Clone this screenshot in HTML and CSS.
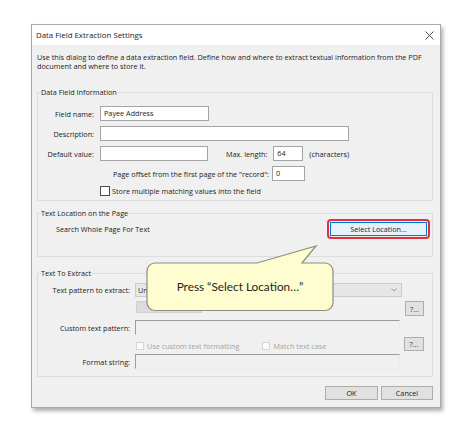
FILE: index.html
```html
<!DOCTYPE html>
<html lang="en">
<head>
<meta charset="utf-8">
<title>Data Field Extraction Settings</title>
<link rel="stylesheet" href="styles.css">
</head>
<body>
<div class="screen">
  <div class="dialog">
    <div class="titlebar">
      <span class="title">Data Field Extraction Settings</span>
      <svg class="close" width="9" height="9" viewBox="0 0 9 9"><path d="M0.5 0.5 L8.5 8.5 M8.5 0.5 L0.5 8.5" stroke="#3a3a3a" stroke-width="0.9" fill="none"/></svg>
    </div>
    <div class="body">
      <p class="intro">Use this dialog to define a data extraction field. Define how and where to extract textual information from the PDF<br>document and where to store it.</p>

      <fieldset class="group g1">
        <legend>Data Field Information</legend>
        <div class="form1">
          <span class="lbl">Field name:</span>
          <div class="cell"><span class="field w109">Payee Address</span></div>
          <span class="lbl">Description:</span>
          <div class="cell"><span class="field w249"></span></div>
          <span class="lbl">Default value:</span>
          <div class="cell">
            <span class="field w108"></span>
            <span class="maxlbl">Max. length:</span>
            <span class="field w30">64</span>
            <span class="unit">(characters)</span>
          </div>
          <span></span>
          <div class="cell offset">
            <span>Page offset from the first page of the "record":</span>
            <span class="field w33">0</span>
          </div>
          <span></span>
          <div class="cell check">
            <span class="box"></span>
            <span>Store multiple matching values into the field</span>
          </div>
        </div>
      </fieldset>

      <fieldset class="group g2">
        <legend>Text Location on the Page</legend>
        <div class="locrow">
          <span>Search Whole Page For Text</span>
          <span class="highlight"><span class="btn focus">Select Location...</span></span>
        </div>
      </fieldset>

      <fieldset class="group g3">
        <legend>Text To Extract</legend>
        <div class="r3 ra">
          <span class="lbl">Text pattern to extract:</span>
          <span class="combo"><span class="combo-text">Un</span><svg width="6" height="4" viewBox="0 0 6 4"><path d="M0.5 0.5 L3 3 L5.5 0.5" stroke="#8a8a8a" stroke-width="0.8" fill="none"/></svg></span>
          <span></span>
        </div>
        <div class="r3 rb">
          <span></span>
          <span class="cell"><span class="graybox"></span></span>
          <span class="btn small">?...</span>
        </div>
        <div class="r3 rc">
          <span class="lbl">Custom text pattern:</span>
          <span class="dis-field"></span>
          <span></span>
        </div>
        <div class="r3 rd">
          <span></span>
          <span class="cell dis">
            <span class="dbox"></span><span class="dtext first">Use custom text formatting</span>
            <span class="dbox"></span><span class="dtext">Match text case</span>
          </span>
          <span class="btn small">?...</span>
        </div>
        <div class="r3 re">
          <span class="lbl">Format string:</span>
          <span class="dis-field"></span>
          <span></span>
        </div>
      </fieldset>

      <div class="footer">
        <span class="btn ok">OK</span>
        <span class="btn cancel">Cancel</span>
      </div>
    </div>
  </div>

  <div class="callout">
    <svg class="bubble" width="188" height="67" viewBox="0 0 188 67"><path d="M9 18 H111 L170 1 L156 18 H179 A8 8 0 0 1 187 26 V57.5 A8 8 0 0 1 179 65.5 H9 A8 8 0 0 1 1 57.5 V26 A8 8 0 0 1 9 18 Z" fill="#fdfdcf" stroke="#8e8e80" stroke-width="1.2"/></svg>
    <div class="callout-text">Press “Select Location…”</div>
  </div>
</div>
</body>
</html>
```

FILE: styles.css
```css
html, body {
  margin: 0;
  padding: 0;
  background: #ffffff;
}

body {
  font-family: "Open Sans", "Noto Sans", sans-serif;
  font-size: 7.25px;
  color: #1a1a1a;
}

.screen {
  position: relative;
  width: 474px;
  height: 434px;
  box-sizing: border-box;
  padding: 24px 0 0 31px;
  overflow: hidden;
}

.dialog {
  width: 410px;
  height: 384px;
  box-sizing: border-box;
  border: 1px solid #a9a9a9;
  background: #f0f0f0;
  box-shadow: 2px 3px 4px rgba(0, 0, 0, 0.32);
  display: flex;
  flex-direction: column;
}

.titlebar {
  height: 20px;
  background: #ffffff;
  display: flex;
  align-items: center;
  justify-content: space-between;
  padding: 0 6px 0 4px;
}

.title {
  font-size: 7.85px;
  line-height: 10px;
  color: #1a1a1a;
}

.body {
  flex: 1;
  display: flex;
  flex-direction: column;
  padding: 8px 7px 7px 5px;
}

.intro {
  margin: 0;
  line-height: 9px;
  white-space: nowrap;
}

.group {
  margin: 0;
  border: 1px solid #dcdcdc;
  padding: 0 9px 0 3px;
  min-width: 0;
}

.group legend {
  padding: 0;
  line-height: 10px;
}

.g1 {
  margin-top: 16px;
  padding-top: 9px;
  padding-bottom: 4px;
}

.g2 {
  margin-top: 7px;
  padding-top: 1px;
  padding-bottom: 17px;
  padding-right: 2px;
}

.g3 {
  margin-top: 11px;
  padding-top: 5px;
  padding-bottom: 7px;
}

/* Data field information */
.form1 {
  display: grid;
  grid-template-columns: 53px 1fr;
  grid-template-rows: 15px 15px 15px 15px 10px;
  column-gap: 6px;
  row-gap: 5px;
}

.lbl {
  text-align: right;
  white-space: nowrap;
  align-self: center;
  line-height: 10px;
}

.cell {
  display: flex;
  align-items: center;
  white-space: nowrap;
}

.field {
  display: block;
  height: 15px;
  box-sizing: border-box;
  border: 1px solid #a4a4a4;
  background: #ffffff;
  padding: 0 3px;
  line-height: 13px;
  white-space: nowrap;
  overflow: hidden;
}

.w109 { width: 109px; }
.w249 { width: 249px; }
.w108 { width: 108px; }
.w30 { width: 30px; }
.w33 { width: 33px; }

.maxlbl {
  margin-left: 18px;
  margin-right: 6px;
}

.unit {
  margin-left: 6px;
}

.offset {
  padding-left: 13px;
  gap: 3px;
}

.check {
  gap: 2px;
}

.box {
  display: block;
  width: 10px;
  height: 10px;
  box-sizing: border-box;
  border: 1px solid #4a4a4a;
  background: #ffffff;
}

/* Text location */
.locrow {
  display: flex;
  align-items: center;
  justify-content: space-between;
  padding-left: 15px;
  height: 20px;
}

.highlight {
  display: block;
  border: 2px solid #e2303a;
  border-radius: 4px;
  padding: 1px 1px;
}

.btn {
  display: flex;
  align-items: center;
  justify-content: center;
  box-sizing: border-box;
  background: #e1e1e1;
  border: 1px solid #adadad;
  line-height: 10px;
  white-space: nowrap;
}

.btn.focus {
  width: 97px;
  height: 14px;
  background: #e5f1fb;
  border-color: #0078d7;
}

/* Text to extract */
.r3 {
  display: grid;
  grid-template-columns: 89px 267px 18px;
  column-gap: 5px;
  align-items: center;
}

.r3 > :nth-child(3) {
  margin-left: -2px;
}

.ra { height: 14px; }
.rb { height: 15px; margin-top: 4px; }
.rc { height: 15px; margin-top: 4px; }
.rd { height: 14px; margin-top: 1px; }
.re { height: 15px; margin-top: 4px; }

.combo {
  height: 14px;
  box-sizing: border-box;
  border: 1px solid #cccccc;
  background: #e6e6e6;
  display: flex;
  align-items: center;
  justify-content: space-between;
  padding: 0 4px 0 2px;
  color: #333333;
}

.graybox {
  display: block;
  width: 66px;
  height: 12px;
  margin-left: 1px;
  box-sizing: border-box;
  background: #dcdcdc;
  border: 1px solid #d0d0d0;
  align-self: flex-start;
}

.rb .cell {
  align-self: start;
}

.btn.small {
  height: 15px;
  width: 19px;
  color: #333333;
}

.rd .btn.small {
  height: 14px;
  width: 20px;
  margin-left: -3px;
}

.dis-field {
  display: block;
  width: 265px;
  height: 15px;
  box-sizing: border-box;
  border-top: 1px solid #9c9c9c;
  border-left: 1px solid #9c9c9c;
  border-right: 1px solid #ececec;
  border-bottom: 1px solid #ececec;
  background: #f0f0f0;
}

.dis {
  color: #a3a3a3;
  padding-top: 5px;
}

.dbox {
  display: block;
  width: 8px;
  height: 8px;
  margin-left: 1px;
  box-sizing: border-box;
  border: 1px solid #d6d6d6;
  background: #fbfbfb;
}

.dtext {
  margin-left: 3px;
}

.dtext.first {
  margin-right: 22px;
}

/* footer */
.footer {
  display: flex;
  justify-content: flex-end;
  gap: 3px;
  margin-top: 9px;
}

.btn.ok {
  width: 53px;
  height: 14px;
}

.btn.cancel {
  width: 52px;
  height: 14px;
}

/* callout */
.callout {
  position: absolute;
  left: 146px;
  top: 245px;
  width: 188px;
  height: 67px;
}

.bubble {
  position: absolute;
  left: 0;
  top: 0;
}

.callout-text {
  position: relative;
  margin: 18px 0 0 1px;
  width: 186px;
  height: 47px;
  display: flex;
  align-items: center;
  justify-content: center;
  font-family: "Lato", "Open Sans", sans-serif;
  font-size: 11.8px;
  color: #1e1e1e;
}
```
